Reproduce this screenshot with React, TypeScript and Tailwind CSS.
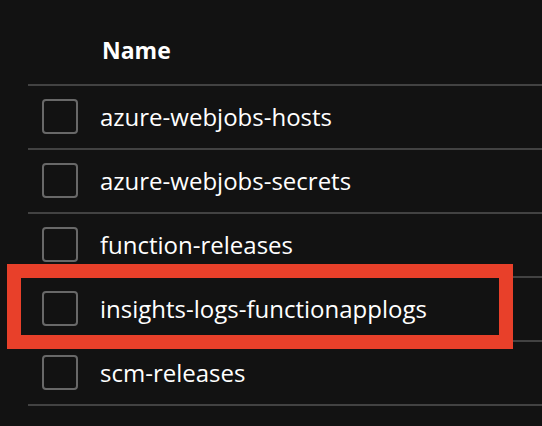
import { useState } from 'react'

const items = [
  'azure-webjobs-hosts',
  'azure-webjobs-secrets',
  'function-releases',
  'insights-logs-functionapplogs',
  'scm-releases',
]

function Row({ name }: { name: string }) {
  const [checked, setChecked] = useState(false)
  return (
    <div className="flex h-[64px] items-center border-b-2 border-[#424242] pb-px">
      <button
        type="button"
        onClick={() => setChecked((v) => !v)}
        className="ml-[14px] h-[35px] w-[36px] rounded-[4px] border-2 border-[#686868]"
        aria-label={`Select ${name}`}
      />
      <span className="ml-[22px] text-[24px] leading-none text-white">{name}</span>
    </div>
  )
}

export default function App() {
  return (
    <div
      className="relative h-[426px] w-[542px] overflow-hidden bg-[#121212]"
      style={{ fontFamily: '"Open Sans", "Noto Sans", sans-serif' }}
    >
      <div className="pl-[28px]">
        {/* Header */}
        <div className="flex h-[86px] items-center border-b-2 border-[#424242] pt-[16px]">
          <span className="ml-[74px] text-[23px] leading-none font-bold text-white">Name</span>
        </div>
        {items.map((name) => (
          <Row key={name} name={name} />
        ))}
      </div>

      {/* Highlight annotation */}
      <div className="absolute left-[7px] top-[264px] h-[85px] w-[506px] border-[14px] border-[#e8402a]" />
    </div>
  )
}
